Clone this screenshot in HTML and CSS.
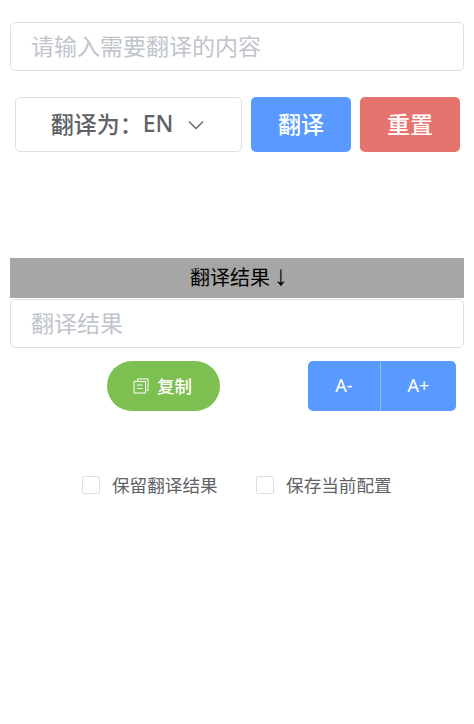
FILE: index.html
```html
<!DOCTYPE html>
<html lang="zh-CN">

<head>
    <meta charset="UTF-8">
    <meta name="viewport" content="width=device-width, initial-scale=1.0">
    <title>翻译</title>
    <link rel="stylesheet" href="styles.css">
</head>

<body>
    <div class="wrapper">
        <div class="field source">请输入需要翻译的内容</div>

        <div class="actions">
            <div class="select">
                <span>翻译为：</span>
                <span class="lang">EN</span>
                <svg class="chevron" viewBox="0 0 16 10" width="16" height="10">
                    <path d="M1 1.5 L8 8.5 L15 1.5" fill="none" stroke="#606266" stroke-width="1.3" />
                </svg>
            </div>
            <a class="btn btn-blue">翻译</a>
            <a class="btn btn-red">重置</a>
        </div>

        <div class="result-title">翻译结果<span class="arrow">↓</span></div>
        <div class="field result">翻译结果</div>

        <div class="tools">
            <a class="copy">
                <svg viewBox="0 0 16 16" width="16" height="16">
                    <path d="M4.5 3.5 V1 H15 V12.5 H12.5 M1 3.5 H12.5 V15 H1 Z M4 7 H9.5 M4 10.5 H9.5" fill="none" stroke="#fff" stroke-width="1" />
                </svg>
                <span>复制</span>
            </a>
            <div class="size-group">
                <a class="size">A-</a>
                <a class="size">A+</a>
            </div>
        </div>

        <div class="options">
            <label class="check"><i class="box"></i>保留翻译结果</label>
            <label class="check"><i class="box"></i>保存当前配置</label>
        </div>
    </div>
</body>

</html>
```

FILE: styles.css
```css
html,
body {
    margin: 0;
    background-color: #fff;
}

body {
    font-family: "Noto Sans", "Noto Sans CJK SC", sans-serif;
}

.wrapper {
    padding: 22px 10px 0;
}

.field {
    height: 49px;
    box-sizing: border-box;
    padding-left: 20px;
    line-height: 47px;
    font-size: 23px;
    color: #c0c4cc;
    background-color: #fff;
    border: 1px solid #dcdfe6;
    border-radius: 5px;
}

.actions {
    display: flex;
    gap: 9px;
    margin: 26px 4px 0 5px;
    height: 55px;
}

.select {
    width: 227px;
    box-sizing: border-box;
    padding-bottom: 3px;
    display: flex;
    justify-content: center;
    align-items: center;
    font-size: 23px;
    font-weight: 500;
    color: #606266;
    border: 1px solid #dcdfe6;
    border-radius: 5px;
}

.chevron {
    margin: 3px 2px 0 15px;
}

.btn {
    width: 100px;
    box-sizing: border-box;
    padding-bottom: 3px;
    display: flex;
    justify-content: center;
    align-items: center;
    font-size: 23px;
    font-weight: 500;
    color: #fff;
    border-radius: 5px;
}

.btn-blue {
    background-color: #589aff;
}

.btn-red {
    background-color: #e5736e;
}

.result-title {
    height: 40px;
    line-height: 40px;
    margin-top: 106px;
    padding-left: 4px;
    text-align: center;
    font-size: 20px;
    color: #000;
    background-color: #a6a6a6;
}

.arrow {
    margin-left: 4px;
    font-family: "Liberation Sans", sans-serif;
    font-size: 28px;
    line-height: 0;
}

.result {
    margin-top: 1px;
}

.tools {
    display: flex;
    justify-content: space-between;
    margin: 13px 8px 0 97px;
}

.copy {
    width: 113px;
    height: 50px;
    box-sizing: border-box;
    padding: 0 2px 2px 0;
    display: flex;
    justify-content: center;
    align-items: center;
    gap: 8px;
    font-size: 17.5px;
    font-weight: 500;
    color: #fff;
    background-color: #7dbf50;
    border-radius: 25px;
}

.copy svg {
    margin-top: 2px;
}

.size-group {
    display: flex;
    width: 148px;
    height: 50px;
}

.size {
    flex: 1;
    box-sizing: border-box;
    padding-bottom: 2px;
    display: flex;
    justify-content: center;
    align-items: center;
    font-size: 18px;
    color: #fff;
    background-color: #589aff;
}

.size:first-child {
    flex: none;
    width: 73px;
    border-radius: 5px 0 0 5px;
    border-right: 1px solid #8fbcff;
}

.size:last-child {
    border-radius: 0 5px 5px 0;
}

.options {
    display: flex;
    gap: 38.5px;
    margin: 61px 0 0 72px;
}

.check {
    display: flex;
    align-items: center;
    font-size: 17.6px;
    color: #606266;
}

.box {
    width: 18px;
    height: 18px;
    box-sizing: border-box;
    margin-right: 12px;
    background-color: #fff;
    border: 1px solid #dcdfe6;
    border-radius: 2px;
}
```
